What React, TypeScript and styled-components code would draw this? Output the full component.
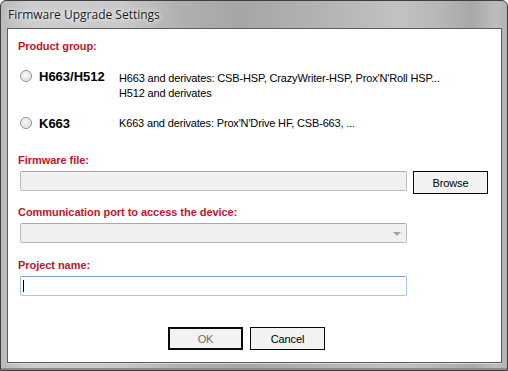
import React from "react";
import styled, { createGlobalStyle } from "styled-components";

const GlobalStyle = createGlobalStyle`
  html, body { margin: 0; padding: 0; background: #ffffff; }
  body { font-family: "Liberation Sans", Arial, sans-serif; }
  * { box-sizing: border-box; }
`;

const Window = styled.div`
  width: 508px;
  height: 371px;
  border: 1px solid #3f3f3f;
  border-radius: 6px 6px 0 0;
  background: linear-gradient(
    to right,
    #b9b9b9 0px,
    #cdcdcd 30px,
    #c9c9c9 120px,
    #b0b0b0 180px,
    #a6a6a6 240px,
    #b3b3b3 320px,
    #c2c2c2 400px,
    #b6b6b6 440px,
    #a8a8a8 470px,
    #bdbdbd 495px,
    #b0b0b0 508px
  );
  display: flex;
  flex-direction: column;
  overflow: hidden;
`;

const TitleBar = styled.div`
  height: 27px;
  flex: none;
  display: flex;
  align-items: center;
  padding: 0 0 0 7px;
`;

const Title = styled.span`
  font-family: "Open Sans", "Noto Sans", sans-serif;
  font-size: 12px;
  color: #1a1a1a;
  margin-top: -1px;
  text-shadow: 0 0 6px rgba(255, 255, 255, 0.9), 0 0 3px rgba(255, 255, 255, 0.8);
`;

const Frame = styled.div`
  flex: 1;
  display: flex;
  padding: 0 5px 7px 6px;
  box-shadow: inset 0 -2px 0 #8a8a8a;
`;

const Client = styled.div`
  flex: 1;
  background: #ffffff;
  border: 1px solid #5d5d5d;
  box-shadow: 0 1px 0 #d8d8d8;
  padding: 11px 10px 0 10px;
  display: flex;
  flex-direction: column;
`;

const SectionLabel = styled.div<{ $mt?: number }>`
  font-size: 11px;
  line-height: 13px;
  font-weight: bold;
  color: #c0142c;
  letter-spacing: -0.05px;
  margin-top: ${(p) => p.$mt ?? 0}px;
`;

const OptionRow = styled.div<{ $mt: number }>`
  display: flex;
  align-items: flex-start;
  margin-top: ${(p) => p.$mt}px;
  padding-left: 2px;
`;

const Radio = styled.span`
  width: 12px;
  height: 12px;
  flex: none;
  border-radius: 50%;
  border: 1px solid #8e8f8f;
  background: radial-gradient(circle at 45% 40%, #fbfbfb 0, #e6e6e6 50%, #c4c4c4 100%);
  box-shadow: inset 0 0 0 1px #f4f4f4;
`;

const OptionName = styled.span`
  width: 80px;
  flex: none;
  margin-left: 7px;
  margin-top: -1px;
  font-size: 13px;
  line-height: 15px;
  font-weight: bold;
  color: #000;
`;

const OptionDesc = styled.div<{ $mt: number }>`
  font-size: 11px;
  line-height: 15px;
  letter-spacing: -0.16px;
  color: #000;
  margin-top: ${(p) => p.$mt}px;
`;

const FieldRow = styled.div<{ $mt: number }>`
  display: flex;
  align-items: flex-start;
  gap: 6px;
  margin-top: ${(p) => p.$mt}px;
  padding-left: 2px;
`;

const Field = styled.div<{ $state: "disabled" | "focused" }>`
  width: 387px;
  height: 20px;
  border-radius: 2px;
  border: 1px solid
    ${(p) => (p.$state === "focused" ? "#a8c8e8" : "#bcbcbc")};
  border-top-color: ${(p) => (p.$state === "focused" ? "#7aa4d0" : "#acacac")};
  background: ${(p) => (p.$state === "focused" ? "#ffffff" : "#f0f0f0")};
  position: relative;
  display: flex;
  align-items: center;
  justify-content: flex-end;
  padding: 0 5px 0 2px;
`;

const Caret = styled.span`
  position: absolute;
  left: 2px;
  top: 3px;
  width: 1px;
  height: 12px;
  background: #000;
`;

const DropArrow = styled.span`
  width: 0;
  height: 0;
  border-left: 4px solid transparent;
  border-right: 4px solid transparent;
  border-top: 4px solid #a2a2a2;
  margin-top: 1px;
`;

const Button = styled.button<{ $default?: boolean; $disabled?: boolean }>`
  width: 75px;
  height: 23px;
  flex: none;
  padding: 0;
  font-family: "Liberation Sans", Arial, sans-serif;
  font-size: 11px;
  letter-spacing: -0.1px;
  color: ${(p) => (p.$disabled ? "#6d6d6d" : "#000")};
  background: #f2f2f2;
  border: ${(p) => (p.$default ? "2px" : "1px")} solid #0a0a0a;
  border-radius: 0;
`;

const ButtonBar = styled.div`
  display: flex;
  gap: 7px;
  margin-top: 31px;
  padding-left: 150px;
`;

export default function App() {
  return (
    <>
      <GlobalStyle />
      <Window>
        <TitleBar>
          <Title>Firmware Upgrade Settings</Title>
        </TitleBar>
        <Frame>
          <Client>
            <SectionLabel>Product group:</SectionLabel>
            <OptionRow $mt={17}>
              <Radio />
              <OptionName>H663/H512</OptionName>
              <div>
                <OptionDesc $mt={1}>
                  H663 and derivates: CSB-HSP, CrazyWriter-HSP, Prox'N'Roll HSP...
                </OptionDesc>
                <OptionDesc $mt={0}>H512 and derivates</OptionDesc>
              </div>
            </OptionRow>
            <OptionRow $mt={16}>
              <Radio />
              <OptionName>K663</OptionName>
              <OptionDesc $mt={-1}>K663 and derivates: Prox'N'Drive HF, CSB-663, ...</OptionDesc>
            </OptionRow>

            <SectionLabel $mt={23}>Firmware file:</SectionLabel>
            <FieldRow $mt={4}>
              <Field $state="disabled" />
              <Button>Browse</Button>
            </FieldRow>

            <SectionLabel $mt={12}>Communication port to access the device:</SectionLabel>
            <FieldRow $mt={4}>
              <Field $state="disabled">
                <DropArrow />
              </Field>
            </FieldRow>

            <SectionLabel $mt={16}>Project name:</SectionLabel>
            <FieldRow $mt={4}>
              <Field $state="focused">
                <Caret />
              </Field>
            </FieldRow>

            <ButtonBar>
              <Button $default $disabled>
                OK
              </Button>
              <Button>Cancel</Button>
            </ButtonBar>
          </Client>
        </Frame>
      </Window>
    </>
  );
}
